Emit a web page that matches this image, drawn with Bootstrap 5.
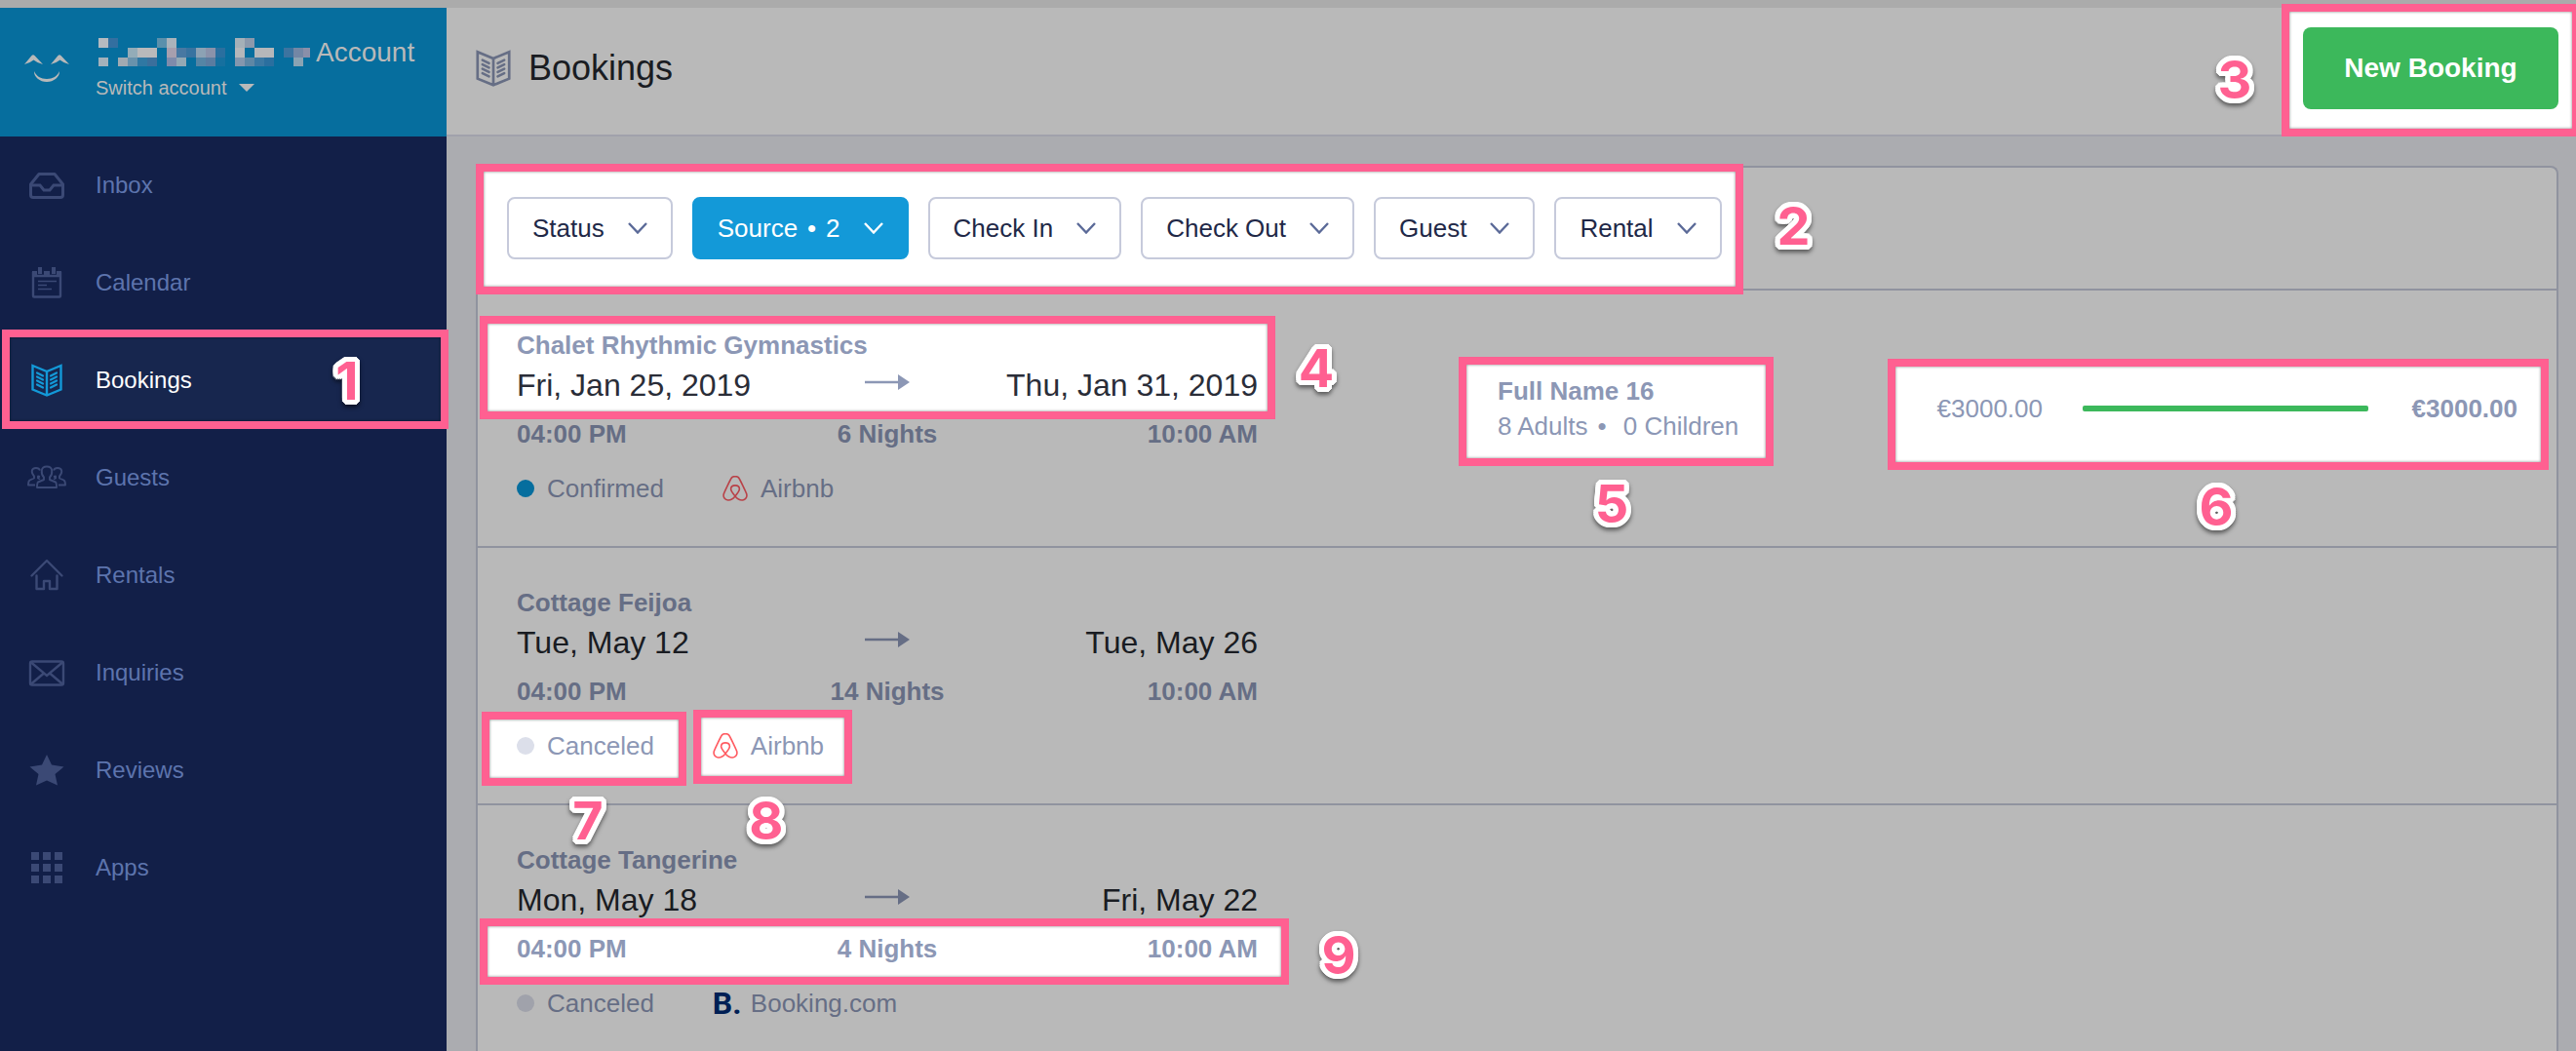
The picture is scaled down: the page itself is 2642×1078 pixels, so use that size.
<!DOCTYPE html>
<html lang="en">
<head>
<meta charset="utf-8">
<meta name="viewport" content="width=device-width, initial-scale=1">
<title>Bookings</title>
<link href="https://cdn.jsdelivr.net/npm/bootstrap@5.3.0/dist/css/bootstrap.min.css" rel="stylesheet">
<style>
  :root { --pink:#ff6091; --line:#90939f; --dim:#666e85; --lit:#8c97b5; }
  body { font-family:"Liberation Sans",Arial,sans-serif; font-size:26px; line-height:34px; color:var(--dim); background:#ababab; }
  .shell { padding-top:8px; }
  a { text-decoration:none; }
  svg { display:block; flex:none; }

  /* sidebar */
  .side { width:458px; background:#121f48; }
  .side-head { height:132px; background:#066e9e; color:#b9b9b9; padding:28px 0 0 24px; gap:26px; }
  .side-head .face { margin-top:18px; }
  .acct { font-size:28px; line-height:36px; }
  .switch { font-size:20px; line-height:36px; color:inherit; gap:12px; }
  .side-link { height:100px; padding-left:24px; gap:26px; font-size:24px; color:#5d74ad; }
  .side-link svg { color:#3b4975; }
  .side-link.active { color:#fff; }
  .side-link.active svg { color:#1399d8; }

  /* page head */
  .content { background:#abacb0; }
  .page-head { background:#b9b9b9; border-bottom:2px solid #a0a1ab; padding:20px 18px 26px 30px; }
  .page-title { gap:18px; }
  .page-head svg { color:#666e85; }
  .page-head h1 { font-size:36px; line-height:40px; color:#191c22; }
  .btn-new { width:262px; height:84px; font-size:28px; font-weight:700; color:#fff; background:#3cb85b; border:0; border-radius:8px; }

  /* panel */
  .panel { margin:30px 18px 0 30px; background:#b9b9b9; border:2px solid var(--line); border-bottom:0; border-radius:8px 8px 0 0; }
  .filters { padding:30px; border-bottom:2px solid var(--line); }
  .filter-set { gap:20px; }
  .btn-filter { height:64px; padding:0 24px; gap:24px; font-size:26px; color:#212847; background:#fff; border:2px solid #c6cadb; border-radius:8px; }
  .btn-filter svg { color:#5b6a98; }
  .btn-filter.on, .btn-filter.on svg { color:#fff; }
  .btn-filter.on { background:#1399d8; border-color:#1399d8; }
  .dot-sep { display:inline-block; width:29px; text-align:center; }

  .booking { display:grid; grid-template-columns:760fr 246fr 447fr 599fr; padding:40px 40px 42px; border-bottom:2px solid var(--line); }
  .guest { grid-column:3; padding-top:45px; line-height:36px; }
  .money { grid-column:4; padding-top:63px; line-height:36px; }
  .stay-name { font-size:26px; line-height:32px; font-weight:700; margin:0; }
  .dates { font-size:32px; line-height:50px; color:#191c22; }
  .dates svg { color:var(--dim); margin-bottom:6px; }
  .times { font-weight:700; margin-top:8px; }
  .trio { display:grid; grid-template-columns:1fr auto 1fr; align-items:center; }
  .trio > :nth-child(3) { text-align:right; }
  .states { margin-top:22px; gap:60px; }
  .state { gap:13px; }
  .dot { width:18px; height:18px; border-radius:50%; background:#a0a2ab; }
  .dot.ok { background:#066e9e; }
  .air { color:#b94248; }
  .bcom { width:26px; font:700 32px/34px Roboto,sans-serif; color:#001f55; white-space:nowrap; }
  .amount { width:112px; text-align:right; }
  .paid { height:6px; margin:0 41px; border-radius:2px; background:#3cb85b; }

  /* highlighted areas */
  .lit { position:relative; z-index:0; }
  .stay .lit, .guest .lit, .money .lit { color:var(--lit); }
  .lit .dates { color:#2a2d38; }
  .lit .dates svg { color:var(--lit); }
  .lit .dot { background:#dcdfea; }
  .lit .air { color:#ff5a60; }
  .spot { position:absolute; z-index:-1; border:8px solid var(--pink); background:#fff; box-shadow:inset 0 0 3px rgba(0,0,0,.5); pointer-events:none; }
  .spot b { position:absolute; width:54px; height:40px; margin-top:7px; font:700 54px/40px Inter,sans-serif; text-align:center; color:var(--pink); filter:drop-shadow(0 3px 2px rgba(0,0,0,.5));
    text-shadow:5px 0 #fff,5px 2px #fff,4px 3px #fff,3px 4px #fff,2px 5px #fff,0 5px #fff,-2px 5px #fff,-3px 4px #fff,-4px 3px #fff,-5px 2px #fff,-5px 0 #fff,-5px -2px #fff,-4px -3px #fff,-3px -4px #fff,-2px -5px #fff,0 -5px #fff,2px -5px #fff,3px -4px #fff,4px -3px #fff,5px -2px #fff; }
  .spot-1 { inset:-2px -2px 0 2px; background:#17264e; } .spot-1 b { right:69px; top:18px; }
  .spot-2 { inset:-34px -22px -36px -32px; } .spot-2 b { right:-87px; top:29px; }
  .spot-3 { inset:-24px -22px -28px -22px; } .spot-3 b { left:-83px; top:43px; }
  .spot-4 { inset:-14px -18px -10px -38px; } .spot-4 b { right:-77px; top:19px; }
  .spot-5 { inset:-17px -36px -23px -40px; } .spot-5 b { left:122px; top:116px; }
  .spot-6 { inset:-33px -32px -45px -47px; } .spot-6 b { left:302px; top:117px; }
  .spot-7 { inset:-18px -33px -24px -36px; } .spot-7 b { left:74px; top:77px; }
  .spot-8 { inset:-20px -29px -22px -20px; } .spot-8 b { left:40px; top:79px; }
  .spot-9 { inset:-14px -32px -20px -38px; } .spot-9 b { right:-86px; top:3px; }
</style>
</head>
<body>
<svg width="0" height="0" class="position-absolute" aria-hidden="true">
  <symbol id="i-book" viewBox="0 0 32 34"><g fill="none" stroke="currentColor" stroke-width="2.4"><path d="M1.5 2 16 8 30.500 2V26.500L16 32.500 1.500 26.500ZM16 8V32"/><path stroke-width="2.200" stroke-linecap="round" d="M6 9.500 12 12.500M6 13.500 12 16.500M6 17.500 12 20.500M6 21.500 12 24.500M26 9.500 20 12.500M26 13.500 20 16.500M26 17.500 20 20.500M26 21.500 20 24.500"/></g></symbol>
  <symbol id="i-chev" viewBox="0 0 20 12"><path d="M1 1 10 10.500 19 1" fill="none" stroke="currentColor" stroke-width="2.400"/></symbol>
  <symbol id="i-arrow" viewBox="0 0 46 16"><path d="M0 8H36" stroke="currentColor" stroke-width="2.400"/><path d="M34 0 46 8 34 16Z" fill="currentColor"/></symbol>
  <symbol id="i-air" viewBox="0 0 26 26"><path d="M13 21C10.500 18 8.600 15.700 8.600 13.600 8.600 11.300 10.400 9.900 13 9.900S17.400 11.300 17.400 13.600C17.400 15.700 15.500 18 13 21ZM13 21C10.500 24 8.200 25.200 5.600 25 2.500 24.700.6 22 1.200 19 1.600 17.200 7.800 4.500 9 2.500 10 .7 11.500.6 13 .6S16 .7 17 2.500C18.200 4.500 24.400 17.200 24.800 19 25.400 22 23.500 24.700 20.400 25 17.800 25.200 15.500 24 13 21Z" fill="none" stroke="currentColor" stroke-width="1.600"/></symbol>
</svg>

<div class="shell d-flex vh-100 overflow-hidden">
  <aside class="side flex-shrink-0">
    <div class="side-head d-flex">
      <svg class="face" width="48" height="34" viewBox="0 0 48 34" fill="#b9b9b9" aria-hidden="true"><path d="M1 12 8.500 3Q10 1.500 11.500 3L20 12Q14 10.500 10.500 7.500 7 10.500 1 12ZM28 12 35.500 3Q37 1.500 38.500 3L47 12Q41 10.500 37.500 7.500 34 10.500 28 12ZM11 19C13 24 18 27 24 27S35 24 37 19C37.500 25 31 30 24 30S10.500 25 11 19Z"/></svg>
      <div>
        <div class="acct d-flex align-items-center">
          <svg width="226" height="30" viewBox="-3 0 226 30" aria-hidden="true">
            <g><path fill="#b5bac0" d="M0 0h10v10H0z"/><path fill="#336fa0" d="M10 0h10v10H10z"/><path fill="#5a90ac" d="M60 0h10v10H60z"/><path fill="#aab3bb" d="M70 0h10v10H70z"/><path fill="#a5b0b8" d="M140 0h10v10h-10z"/><path fill="#8c99ac" d="M150 0h10v10h-10z"/></g>
            <g><path fill="#93acb8" d="M30 10h10v10H30z"/><path fill="#b9b9bb" d="M40 10h20v10H40z"/><path fill="#a79fae" d="M70 10h10v10H70z"/><path fill="#4878a2" d="M80 10h10v10H80z"/><path fill="#3873a0" d="M90 10h10v10H90z"/><path fill="#8ca2b4" d="M100 10h10v10h-10z"/><path fill="#8a92aa" d="M110 10h10v10h-10z"/><path fill="#2a6f9f" d="M120 10h10v10h-10z"/><path fill="#b5b7ba" d="M140 10h10v10h-10zM160 10h20v10h-20z"/><path fill="#3c74a0" d="M190 10h10v10h-10z"/><path fill="#7387a5" d="M200 10h10v10h-10z"/><path fill="#8a8fa9" d="M210 10h7v10h-7z"/></g>
            <g><path fill="#a3b1bb" d="M0 20h10v9H0z"/><path fill="#a0aab2" d="M20 20h10v9H20z"/><path fill="#6892ac" d="M30 20h10v9H30z"/><path fill="#2f78a3" d="M40 20h10v9H40z"/><path fill="#3a6f9c" d="M50 20h10v9H50z"/><path fill="#7f8bab" d="M70 20h10v9H70z"/><path fill="#93a8b4" d="M80 20h10v9H80z"/><path fill="#5585a5" d="M100 20h10v9h-10z"/><path fill="#5a7ca0" d="M110 20h10v9h-10z"/><path fill="#16709f" d="M120 20h10v9h-10z"/><path fill="#8497ae" d="M140 20h10v9h-10z"/><path fill="#5e87a5" d="M150 20h10v9h-10z"/><path fill="#3a78a3" d="M160 20h10v9h-10z"/><path fill="#2a6f9f" d="M170 20h10v9h-10z"/><path fill="#8aa3b3" d="M200 20h10v9h-10z"/></g>
          </svg>
          <span>Account</span>
        </div>
        <a href="#" class="switch d-flex align-items-center">Switch account
          <svg width="16" height="8" viewBox="0 0 16 8" fill="currentColor" aria-hidden="true"><path d="M0 0H16L8 8Z"/></svg>
        </a>
      </div>
    </div>
    <nav class="nav flex-column" aria-label="Main">
      <a href="#" class="side-link d-flex align-items-center"><svg width="48" height="34" viewBox="0 0 48 34" aria-hidden="true"><g fill="none" stroke="currentColor" stroke-width="3"><path stroke-linejoin="round" d="M7.500 16 16 5.500H32L40.500 16V27Q40.500 29.500 38 29.500H10Q7.500 29.500 7.500 27Z"/><path d="M8 17H17L21 22H27L31 17H40"/></g></svg>Inbox</a>
      <a href="#" class="side-link d-flex align-items-center"><svg width="48" height="34" viewBox="0 0 48 34" aria-hidden="true"><path fill="currentColor" d="M15 1h4v7h-4zM29 1h4v7h-4zM9 5h5v5H9zM34 5h5v5h-5zM21 5h6v5h-6z"/><g fill="none" stroke="currentColor"><path stroke-width="2.400" d="M10 6V30.500Q10 31.500 11 31.500H37Q38 31.500 38 30.500V6M9 10H39"/><path stroke-width="1.600" d="M15 15.500H34M15 19.500H24M15 23.500H29"/></g></svg>Calendar</a>
      <a href="#" class="side-link active lit d-flex align-items-center" aria-current="page"><span class="spot spot-1"><b>1</b></span><svg width="48" height="34" aria-hidden="true"><use href="#i-book" x="8" width="32" height="34"/></svg>Bookings</a>
      <a href="#" class="side-link d-flex align-items-center"><svg width="48" height="34" viewBox="0 0 48 34" aria-hidden="true"><g fill="none" stroke="currentColor" stroke-width="1.900" stroke-linejoin="round"><path d="M21 16.500C19 14.500 18.500 12 18.800 9.500 19.200 6.800 21 5.500 24 5.500S28.800 6.800 29.200 9.500C29.500 12 29 14.500 27 16.500V19L33 21.500Q34 22.500 34 27H14Q14 22.500 15 21.500L21 19Z"/><path d="M12 24.500H5Q5 20.500 6.500 19.500L11 17.500V15.500C7.500 11.500 8 7 13 7 15 7 16.500 8 17 9.500M17 16 15 15.500V17.500L17 18.500M36 24.500H43Q43 20.500 41.500 19.500L37 17.500V15.500C40.500 11.500 40 7 35 7 33 7 31.500 8 31 9.500M31 16 33 15.500V17.500L31 18.500"/></g></svg>Guests</a>
      <a href="#" class="side-link d-flex align-items-center"><svg width="48" height="34" viewBox="0 0 48 34" aria-hidden="true"><g fill="none" stroke="currentColor" stroke-width="2.400" stroke-linecap="round" stroke-linejoin="round"><path d="M8.500 17.500 24 2 39.500 17.500"/><path d="M13.500 17.500V31H21V23H27V31H34.500V17.500"/></g></svg>Rentals</a>
      <a href="#" class="side-link d-flex align-items-center"><svg width="48" height="34" viewBox="0 0 48 34" aria-hidden="true"><g fill="none" stroke="currentColor" stroke-width="2.400"><rect x="7" y="5.500" width="34" height="24" rx="2"/><path d="M8 6.500 24 20 40 6.500M8 28.500 21 17.500M40 28.500 27 17.500"/></g></svg>Inquiries</a>
      <a href="#" class="side-link d-flex align-items-center"><svg width="48" height="34" viewBox="0 0 48 34" aria-hidden="true"><path fill="currentColor" d="M24 1 29 11.500 41.500 13.500 32.500 21 35 32.500 24 27.500 13 32.500 15.500 21 6.500 13.500 19 11.500Z"/></svg>Reviews</a>
      <a href="#" class="side-link d-flex align-items-center"><svg width="48" height="34" viewBox="0 0 48 34" aria-hidden="true"><path fill="currentColor" d="M8 1h8v8H8zM20 1h8v8h-8zM32 1h8v8h-8zM8 13h8v8H8zM20 13h8v8h-8zM32 13h8v8h-8zM8 25h8v8H8zM20 25h8v8h-8zM32 25h8v8h-8z"/></svg>Apps</a>
    </nav>
  </aside>

  <div class="content flex-grow-1">
    <header class="page-head d-flex align-items-center justify-content-between">
      <div class="page-title d-flex align-items-center">
        <svg width="36" height="38" aria-hidden="true"><use href="#i-book" width="36" height="38"/></svg>
        <h1 class="fw-normal m-0">Bookings</h1>
      </div>
      <div class="lit"><span class="spot spot-3"><b>3</b></span><button type="button" class="btn btn-new p-0 d-block">New Booking</button></div>
    </header>

    <main class="panel">
      <div class="filters d-flex">
        <div class="filter-set lit d-flex">
          <span class="spot spot-2"><b>2</b></span>
          <button type="button" class="btn btn-filter d-flex align-items-center">Status<svg width="20" height="12" aria-hidden="true"><use href="#i-chev"/></svg></button>
          <button type="button" class="btn btn-filter on d-flex align-items-center"><span>Source<span class="dot-sep">•</span>2</span><svg width="20" height="12" aria-hidden="true"><use href="#i-chev"/></svg></button>
          <button type="button" class="btn btn-filter d-flex align-items-center">Check In<svg width="20" height="12" aria-hidden="true"><use href="#i-chev"/></svg></button>
          <button type="button" class="btn btn-filter d-flex align-items-center">Check Out<svg width="20" height="12" aria-hidden="true"><use href="#i-chev"/></svg></button>
          <button type="button" class="btn btn-filter d-flex align-items-center">Guest<svg width="20" height="12" aria-hidden="true"><use href="#i-chev"/></svg></button>
          <button type="button" class="btn btn-filter d-flex align-items-center">Rental<svg width="20" height="12" aria-hidden="true"><use href="#i-chev"/></svg></button>
        </div>
      </div>

      <article class="booking">
        <div class="stay">
          <div class="lit">
            <span class="spot spot-4"><b>4</b></span>
            <h2 class="stay-name">Chalet Rhythmic Gymnastics</h2>
            <div class="dates trio"><span>Fri, Jan 25, 2019</span><svg width="46" height="16" aria-hidden="true"><use href="#i-arrow"/></svg><span>Thu, Jan 31, 2019</span></div>
          </div>
          <div class="times trio"><span>04:00 PM</span><span>6 Nights</span><span>10:00 AM</span></div>
          <div class="states d-flex">
            <span class="state d-flex align-items-center"><span class="dot ok"></span>Confirmed</span>
            <span class="state d-flex align-items-center"><svg class="air" width="26" height="26" aria-hidden="true"><use href="#i-air"/></svg>Airbnb</span>
          </div>
        </div>
        <div class="guest">
          <div class="lit d-inline-block text-nowrap">
            <span class="spot spot-5"><b>5</b></span>
            <strong class="d-block">Full Name 16</strong>
            8 Adults<span class="dot-sep">•</span> 0 Children
          </div>
        </div>
        <div class="money">
          <div class="lit d-flex align-items-center">
            <span class="spot spot-6"><b>6</b></span>
            <span class="amount">€3000.00</span>
            <div class="paid flex-grow-1"></div>
            <strong class="amount">€3000.00</strong>
          </div>
        </div>
      </article>

      <article class="booking">
        <div class="stay">
          <h2 class="stay-name">Cottage Feijoa</h2>
          <div class="dates trio"><span>Tue, May 12</span><svg width="46" height="16" aria-hidden="true"><use href="#i-arrow"/></svg><span>Tue, May 26</span></div>
          <div class="times trio"><span>04:00 PM</span><span>14 Nights</span><span>10:00 AM</span></div>
          <div class="states d-flex">
            <span class="state lit d-flex align-items-center"><span class="spot spot-7"><b>7</b></span><span class="dot"></span>Canceled</span>
            <span class="state lit d-flex align-items-center"><span class="spot spot-8"><b>8</b></span><svg class="air" width="26" height="26" aria-hidden="true"><use href="#i-air"/></svg>Airbnb</span>
          </div>
        </div>
      </article>

      <article class="booking">
        <div class="stay">
          <h2 class="stay-name">Cottage Tangerine</h2>
          <div class="dates trio"><span>Mon, May 18</span><svg width="46" height="16" aria-hidden="true"><use href="#i-arrow"/></svg><span>Fri, May 22</span></div>
          <div class="times lit"><span class="spot spot-9"><b>9</b></span><div class="trio"><span>04:00 PM</span><span>4 Nights</span><span>10:00 AM</span></div></div>
          <div class="states d-flex">
            <span class="state d-flex align-items-center"><span class="dot"></span>Canceled</span>
            <span class="state d-flex align-items-center"><span class="bcom">B.</span>Booking.com</span>
          </div>
        </div>
      </article>
    </main>
  </div>
</div>
<script src="https://cdn.jsdelivr.net/npm/bootstrap@5.3.0/dist/js/bootstrap.bundle.min.js"></script>
</body>
</html>
